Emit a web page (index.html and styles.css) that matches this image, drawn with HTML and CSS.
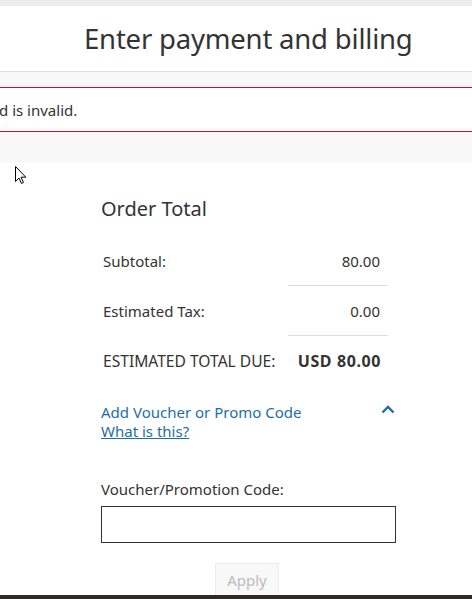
FILE: index.html
```html
<!DOCTYPE html>
<html>
<head>
<meta charset="utf-8">
<link rel="stylesheet" href="styles.css">
</head>
<body>
<div class="topstrip"></div>
<header class="header"><h1 class="title">Enter payment and billing</h1></header>
<div class="band band-top"></div>
<div class="error">d is invalid.</div>
<div class="band band-bottom"></div>
<main class="main">
  <section class="order">
    <h2 class="order-title">Order Total</h2>
    <div class="row row-line first">
      <span class="label">Subtotal:</span>
      <span class="value">80.00</span>
    </div>
    <div class="row row-line">
      <span class="label">Estimated Tax:</span>
      <span class="value">0.00</span>
    </div>
    <div class="row">
      <span class="label caps">ESTIMATED TOTAL DUE:</span>
      <span class="value total">USD 80.00</span>
    </div>
    <div class="promo">
      <div class="promo-text">
        <div class="promo-title">Add Voucher or Promo Code</div>
        <a class="promo-link" href="#">What is this?</a>
      </div>
      <svg class="chevron" width="14" height="9" viewBox="0 0 14 9"><path d="M1.5 7.5 L7 2 L12.5 7.5" fill="none" stroke="#1d6fa8" stroke-width="2.4"/></svg>
    </div>
    <label class="code-label">Voucher/Promotion Code:</label>
    <div class="code-input"></div>
    <div class="apply-wrap"><button class="apply">Apply</button></div>
  </section>
</main>
<div class="bottombar"></div>
<svg class="cursor" width="12" height="19" viewBox="0 0 12 19"><path d="M0.5 0.5 L0.5 15.5 L4 12 L6.5 17.5 L8.5 16.5 L6 11.2 L10.8 11.2 Z" fill="#fff" stroke="#000" stroke-width="1"/></svg>
</body>
</html>
```
FILE: styles.css
```css
html, body {
  margin: 0;
  padding: 0;
  background: #fff;
  overflow: hidden;
}
body {
  width: 472px;
  height: 599px;
  position: relative;
  font-family: "Noto Sans", "DejaVu Sans", sans-serif;
  color: #333;
}
.topstrip {
  height: 6px;
  background: #ececec;
}
.header {
  height: 65px;
  border-bottom: 1px solid #dedede;
  display: flex;
  align-items: center;
}
.title {
  margin: 0 0 0 84px;
  font-weight: 400;
  font-size: 27.5px;
  color: #333;
  letter-spacing: -0.2px;
  line-height: 1;
  padding-top: 1px;
}
.band {
  background: #f8f8f8;
}
.band-top { height: 15px; }
.band-bottom { height: 30px; }
.error {
  border-top: 1px solid #c8102e;
  border-bottom: 1px solid #c8102e;
  height: 43px;
  display: flex;
  align-items: center;
  font-size: 15px;
  margin-left: -1px;
  color: #333;
}
.main {
  padding-left: 101px;
}
.order {
  width: 295px;
}
.order-title {
  margin: 34px 0 0 0;
  font-weight: 400;
  font-size: 20px;
  line-height: 26px;
  color: #333;
}
.row {
  display: flex;
  justify-content: space-between;
  align-items: center;
  height: 50px;
  font-size: 15px;
  padding-left: 2px;
  position: relative;
  width: 285px;
  box-sizing: border-box;
}
.row.first { margin-top: 14px; }
.row-line::after {
  content: "";
  position: absolute;
  left: 187px;
  right: -2px;
  bottom: 0;
  height: 1px;
  background: #dcdcdc;
}
.caps { font-size: 15.6px; }
.value { padding-right: 6px; }
.total { font-weight: 700; font-size: 16px; letter-spacing: 0.6px; padding-right: 5px; }
.promo {
  display: flex;
  justify-content: space-between;
  align-items: flex-start;
  margin-top: 17px;
  width: 294px;
}
.promo-text {
  font-size: 15px;
  line-height: 19px;
  color: #1d6fa8;
}
.promo-link {
  color: #1d6fa8;
  text-decoration: underline;
}
.chevron { margin-top: 2px; }
.code-label {
  display: block;
  margin-top: 38px;
  font-size: 15px;
  line-height: 20px;
  color: #333;
}
.code-input {
  margin-top: 7px;
  height: 35px;
  border: 1px solid #333;
  width: 293px;
}
.apply-wrap {
  display: flex;
  justify-content: center;
  margin-top: 20px;
}
.apply {
  width: 64px;
  height: 40px;
  background: #f8f8f8;
  border: 1px solid #ececec;
  color: #bbb;
  font-family: inherit;
  font-size: 15px;
  padding: 0 0 6px;
  margin-left: -3px;
}
.bottombar {
  position: absolute;
  left: 0;
  right: 0;
  bottom: 0;
  height: 4px;
  background: #2d2b22;
}
.cursor {
  position: absolute;
  left: 15px;
  top: 166px;
}
```
